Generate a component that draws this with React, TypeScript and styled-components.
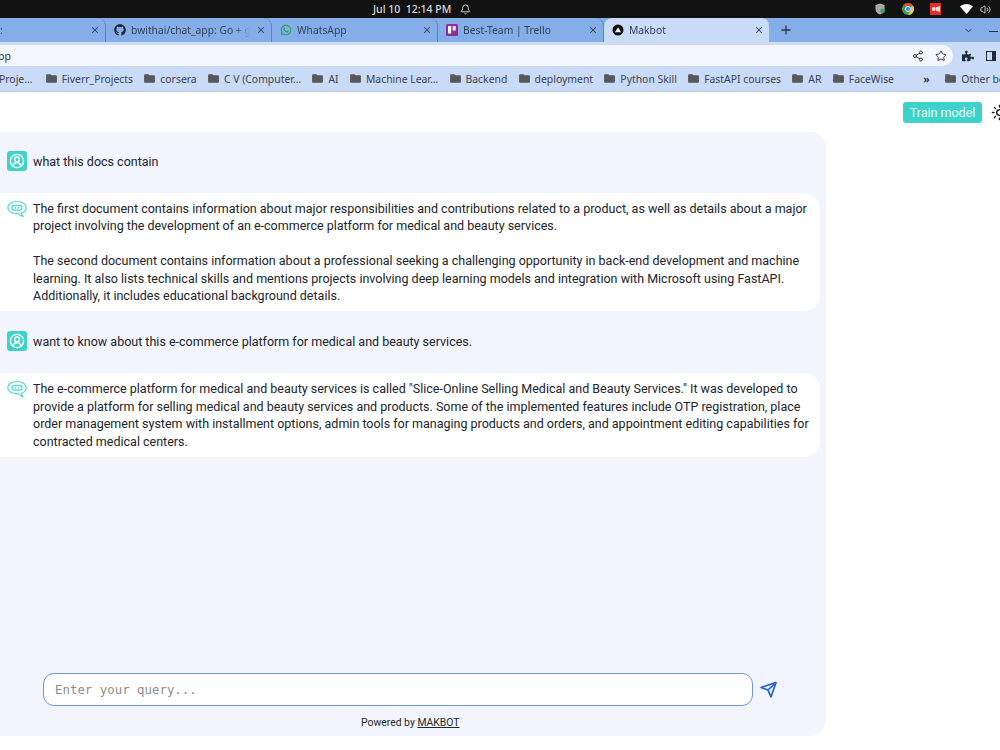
import React from 'react'
import styled, { createGlobalStyle } from 'styled-components'
import { FaGithub, FaWhatsapp, FaPuzzlePiece } from 'react-icons/fa'
import { MdFolder } from 'react-icons/md'
import { Bell, ChevronDown, Plus, Share2, Star, Sun, Volume2, X } from 'lucide-react'

const GlobalStyle = createGlobalStyle`
  html, body {
    margin: 0;
    padding: 0;
    height: 750px;
    overflow: hidden;
    background: #fff;
  }
`

const Screen = styled.div`
  width: 1000px;
  height: 750px;
  overflow: hidden;
  display: flex;
  flex-direction: column;
  font-family: Roboto, sans-serif;
`

const SystemBar = styled.div`
  height: 18px;
  flex: none;
  background: #121212;
  color: #dcdcdc;
  display: flex;
  align-items: center;
  padding-left: 373px;
  font: 500 10.5px "Noto Sans", sans-serif;
`

const Clock = styled.span`
  width: 87px;
  white-space: pre;
`

const Tray = styled.div`
  margin-left: auto;
  display: flex;
  align-items: center;
  gap: 16px;
  padding-right: 9px;
`

const WifiGlyph = styled.svg`
  margin-left: 3px;
  margin-right: -9px;
`

const TabStrip = styled.div`
  height: 24px;
  flex: none;
  background: #85ade8;
  display: flex;
  margin-left: -60px;
  width: 1060px;
`

const Tab = styled.div<{ $active?: boolean; $inset?: number }>`
  width: 166px;
  flex: none;
  box-sizing: border-box;
  display: flex;
  align-items: center;
  gap: 5px;
  padding: 0 5px 0 ${({ $inset }) => $inset ?? 8}px;
  border-radius: 8px 8px 0 0;
  background: ${({ $active }) => ($active ? '#c9dbf6' : 'transparent')};
  border-right: 1px solid ${({ $active }) => ($active ? 'transparent' : '#5f83b8')};
  color: #33415a;
  font: 10.3px "Noto Sans", sans-serif;
  background-clip: padding-box;
`

const TabTitle = styled.span`
  flex: 1;
  min-width: 0;
  overflow: hidden;
  white-space: nowrap;
  -webkit-mask-image: linear-gradient(to right, #000 85%, transparent);
  mask-image: linear-gradient(to right, #000 85%, transparent);
`

const StripActions = styled.div`
  flex: 1;
  display: flex;
  align-items: center;
  padding-left: 9px;
  color: #26344a;
`

const StripRight = styled.div`
  margin-left: auto;
  display: flex;
  align-items: center;
  gap: 15px;
  padding-right: 2px;
`

const Minimize = styled.span`
  display: block;
  width: 9px;
  height: 1px;
  background: #26344a;
  margin-top: 3px;
`

const Toolbar = styled.div`
  height: 24px;
  flex: none;
  box-sizing: border-box;
  background: #c9dbf6;
  padding-top: 3px;
  display: flex;
  color: #2f3a4c;
`

const Omnibox = styled.div`
  width: 953px;
  height: 21px;
  flex: none;
  box-sizing: border-box;
  background: #f3f6fc;
  border-radius: 0 11px 11px 0;
  display: flex;
  align-items: center;
  gap: 11px;
  padding-right: 6px;
  font: 10.5px "Noto Sans", sans-serif;
  color: #2e3744;
`

const UrlText = styled.span`
  margin-right: auto;
  margin-left: -2px;
`

const ToolbarIcons = styled.div`
  display: flex;
  align-items: center;
  gap: 12px;
  padding-left: 9px;
  height: 21px;
`

const SidePanelIcon = styled.span`
  display: block;
  box-sizing: border-box;
  width: 10px;
  height: 10px;
  border: 1.5px solid #1f2a3a;
  border-right-width: 4px;
`

const Bookmarks = styled.div`
  height: 26px;
  flex: none;
  box-sizing: border-box;
  background: #c9dbf6;
  border-bottom: 1px solid #b4c6df;
  display: flex;
  align-items: center;
  gap: 10.3px;
  margin-left: -1px;
  width: 1040px;
  font: 10.4px "Noto Sans", sans-serif;
  color: #38424f;
  white-space: nowrap;
`

const Bookmark = styled.span`
  display: flex;
  align-items: center;
  gap: 4px;

  svg {
    color: #56585c;
  }
`

const Clipped = styled.span`
  margin-right: 2px;
`

const More = styled.span`
  margin-left: 19px;
  font-weight: 700;
`

const BarDivider = styled.span`
  width: 1px;
  height: 14px;
  background: #9fb2cc;
  margin-left: -3px;
  margin-right: -3px;
`

const Page = styled.main`
  flex: 1;
  min-height: 0;
  display: flex;
  flex-direction: column;
  background: #fff;
`

const TopRow = styled.div`
  height: 40px;
  flex: none;
  display: flex;
  align-items: center;
  justify-content: flex-end;
  gap: 9px;
  margin-right: -8px;
`

const TrainButton = styled.button`
  width: 79px;
  height: 21px;
  border: 0;
  padding: 0;
  border-radius: 3px;
  background: #3cd3c8;
  color: #eafaf9;
  font: 12.5px Roboto, sans-serif;
`

const Panel = styled.section`
  width: 846px;
  height: 604px;
  flex: none;
  margin-left: -20px;
  box-sizing: border-box;
  background: #f2f5fd;
  border-radius: 16px;
  padding: 0 6px 0 20px;
  display: flex;
  flex-direction: column;
`

const Messages = styled.div`
  flex: 1;
  min-height: 0;
  margin-top: -1px;
`

const UserRow = styled.div`
  height: 62px;
  display: flex;
  align-items: center;
  gap: 6px;
  padding: 0 0 2px 7px;
  color: #20242c;
  font-size: 12.5px;
  box-sizing: border-box;
`

const BotBubble = styled.div`
  margin-left: -20px;
  background: #fff;
  border-radius: 16px;
  padding: 7px 10px 7px 27px;
  display: flex;
  gap: 6px;
  color: #20242c;
  font-size: 12.5px;
  line-height: 17.4px;
`

const BotText = styled.div`
  flex: 1;

  p {
    margin: 0 0 17.4px;
  }

  p:last-child {
    margin: 0;
  }
`

const IconBox = styled.span`
  flex: none;
  width: 20px;
  height: 20px;
  display: block;
`

const Composer = styled.div`
  flex: none;
  display: flex;
  align-items: center;
  gap: 7px;
  padding-left: 43px;
`

const QueryInput = styled.input`
  width: 710px;
  height: 33px;
  box-sizing: border-box;
  border: 1px solid #6d97e0;
  border-radius: 11px;
  background: #fff;
  padding: 0 11px;
  outline: none;
  font: 12.4px "DejaVu Sans Mono", monospace;

  &::placeholder {
    color: #8b8d90;
    opacity: 1;
  }
`

const SendButton = styled.span`
  display: block;
  width: 17px;
  height: 17px;
  color: #1f62d8;
`

const Powered = styled.div`
  flex: none;
  height: 30px;
  box-sizing: border-box;
  padding: 10px 0 0 361px;
  font-size: 10.4px;
  color: #22262c;

  a {
    color: inherit;
  }
`

const UserIcon = () => (
  <IconBox as="svg" viewBox="0 0 20 20">
    <rect width="20" height="20" rx="3" fill="#3cd3c8" />
    <g fill="none" stroke="#fff" strokeWidth="1.4">
      <circle cx="10" cy="10" r="6.6" />
      <circle cx="10" cy="8.4" r="2.4" />
      <path d="M5.8 14.6c1-2.2 2.5-3 4.2-3s3.2.8 4.2 3" />
    </g>
  </IconBox>
)

const BotIcon = () => (
  <IconBox as="svg" viewBox="0 0 20 20">
    <g fill="none" stroke="#4dd8ce" strokeWidth="1.2">
      <path d="M10 1.5c5.2 0 9.2 2.7 9.2 6.2 0 2.6-2 4.6-5 5.6l1.6 3.2c-1.8-.4-3.6-1.6-4.8-2.8-.4 0-.7 0-1 0C4.8 13.7.8 11.2.8 7.700S4.8 1.5 10 1.5z" />
      <rect x="5" y="5.4" width="10" height="4.8" rx="2.4" />
      <path d="M8.4 6.8v2M11.6 6.8v2" />
    </g>
  </IconBox>
)

const TrelloIcon = () => (
  <svg width="12" height="12" viewBox="0 0 12 12">
    <rect width="12" height="12" rx="1.5" fill="#8f2f8f" />
    <rect x="2" y="2" width="3.2" height="7.5" fill="#fff" />
    <rect x="6.6" y="2" width="3.2" height="4.6" fill="#f2d6ee" />
  </svg>
)

const MakbotIcon = () => (
  <svg width="12" height="12" viewBox="0 0 12 12">
    <circle cx="6" cy="6" r="5.5" fill="#0d0d0d" />
    <path d="M6 3.2 9 8.2H3z" fill="#fff" />
  </svg>
)

const ChromeIcon = () => (
  <svg width="12" height="12" viewBox="0 0 12 12">
    <circle cx="6" cy="6" r="6" fill="#3aa655" />
    <path d="M6 0a6 6 0 0 1 5.2 3H6a3 3 0 0 0-2.7 1.7L1.2 2.4A6 6 0 0 1 6 0z" fill="#de4a3c" />
    <path d="M11.2 3A6 6 0 0 1 6 12l2.6-4.5A3 3 0 0 0 8.6 4z" fill="#f6c544" />
    <circle cx="6" cy="6" r="2.6" fill="#4a86e8" stroke="#fff" strokeWidth=".8" />
  </svg>
)

const ShieldIcon = () => (
  <svg width="11" height="12" viewBox="0 0 11 12">
    <path d="M5 .5 9.500 2v4c0 3-2 4.800-4.500 5.500C2.500 10.800.5 9 .5 6V2z" fill="#a6a8a6" />
    <circle cx="7.600" cy="7.800" r="2.400" fill="#39a85a" />
  </svg>
)

const RecordIcon = () => (
  <svg width="11" height="12" viewBox="0 0 11 12">
    <rect width="11" height="12" fill="#e0302c" />
    <circle cx="3.800" cy="6" r="2" fill="#fbdcdb" />
    <path d="M6 4h1l3-1v6L7 8H6z" fill="#fbdcdb" />
  </svg>
)

const WifiIcon = () => (
  <WifiGlyph width="13" height="10" viewBox="0 0 13 10">
    <path d="M6.500 10 0 2.600C1.800 1 4 0 6.500 0S11.200 1 13 2.600z" fill="#fff" />
  </WifiGlyph>
)

const SendIcon = () => (
  <SendButton as="svg" viewBox="0 0 17 17" fill="none" stroke="currentColor" strokeWidth="1.7" strokeLinejoin="round">
    <path d="M1 6.500 16 1.500 11 16 8 9z" />
    <path d="M8 9 16 1.500" />
  </SendButton>
)

const folder = <MdFolder size={13} />

const bookmarks = [
  'Fiverr_Projects',
  'corsera',
  'C V (Computer…',
  'AI',
  'Machine Lear…',
  'Backend',
  'deployment',
  'Python Skill',
  'FastAPI courses',
  'AR',
  'FaceWise',
]

const tabs: { title: string; icon?: React.ReactNode; active?: boolean; inset?: number }[] = [
  { title: ':', inset: 60 },
  { title: 'bwithai/chat_app: Go + github', icon: <FaGithub size={12} color="#1c2430" /> },
  { title: 'WhatsApp', icon: <FaWhatsapp size={12} color="#25a244" /> },
  { title: 'Best-Team | Trello', icon: <TrelloIcon /> },
  { title: 'Makbot', icon: <MakbotIcon />, active: true },
]

function App(): JSX.Element {
  return (
    <Screen>
      <GlobalStyle />
      <SystemBar>
        <Clock>Jul 10  12:14 PM</Clock>
        <Bell size={11} />
        <Tray>
          <ShieldIcon />
          <ChromeIcon />
          <RecordIcon />
          <WifiIcon />
          <Volume2 size={11} color="#ddd" />
        </Tray>
      </SystemBar>

      <TabStrip>
        {tabs.map((tab) => (
          <Tab key={tab.title} $active={tab.active} $inset={tab.inset}>
            {tab.icon}
            <TabTitle>{tab.title}</TabTitle>
            <X size={10} strokeWidth={2.5} />
          </Tab>
        ))}
        <StripActions>
          <Plus size={14} strokeWidth={2.2} />
          <StripRight>
            <ChevronDown size={11} />
            <Minimize />
          </StripRight>
        </StripActions>
      </TabStrip>

      <Toolbar>
        <Omnibox>
          <UrlText>pp</UrlText>
          <Share2 size={12} />
          <Star size={12} />
        </Omnibox>
        <ToolbarIcons>
          <FaPuzzlePiece size={12} color="#1f2a3a" />
          <SidePanelIcon />
        </ToolbarIcons>
      </Toolbar>

      <Bookmarks>
        <Clipped>Proje…</Clipped>
        {bookmarks.map((name) => (
          <Bookmark key={name}>
            {folder}
            {name}
          </Bookmark>
        ))}
        <More>»</More>
        <BarDivider />
        <Bookmark>
          {folder}
          Other bookmarks
        </Bookmark>
      </Bookmarks>

      <Page>
        <TopRow>
          <TrainButton>Train model</TrainButton>
          <Sun size={17} color="#16181c" />
        </TopRow>
        <Panel>
          <Messages>
            <UserRow>
              <UserIcon />
              what this docs contain
            </UserRow>
            <BotBubble>
              <BotIcon />
              <BotText>
                <p>
                  The first document contains information about major responsibilities and contributions related to a
                  product, as well as details about a major project involving the development of an e-commerce platform
                  for medical and beauty services.
                </p>
                <p>
                  The second document contains information about a professional seeking a challenging opportunity in
                  back-end development and machine learning. It also lists technical skills and mentions projects
                  involving deep learning models and integration with Microsoft using FastAPI. Additionally, it includes
                  educational background details.
                </p>
              </BotText>
            </BotBubble>
            <UserRow>
              <UserIcon />
              want to know about this e-commerce platform for medical and beauty services.
            </UserRow>
            <BotBubble>
              <BotIcon />
              <BotText>
                The e-commerce platform for medical and beauty services is called "Slice-Online Selling Medical and
                Beauty Services." It was developed to provide a platform for selling medical and beauty services and
                products. Some of the implemented features include OTP registration, place order management system with
                installment options, admin tools for managing products and orders, and appointment editing capabilities
                for contracted medical centers.
              </BotText>
            </BotBubble>
          </Messages>
          <Composer>
            <QueryInput placeholder="Enter your query..." />
            <SendIcon />
          </Composer>
          <Powered>
            Powered by <a href="#makbot">MAKBOT</a>
          </Powered>
        </Panel>
      </Page>
    </Screen>
  )
}

export default App
